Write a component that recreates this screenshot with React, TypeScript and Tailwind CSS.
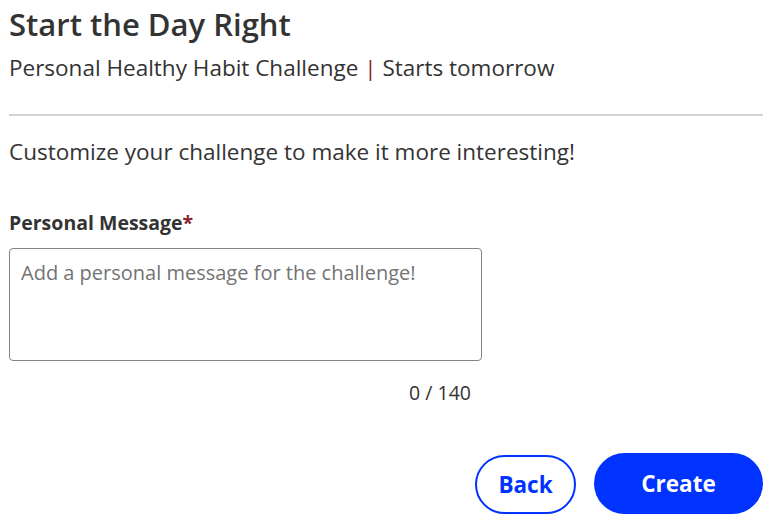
import { useState } from 'react'

const MAX_LENGTH = 140

export default function App() {
  const [message, setMessage] = useState('')

  return (
    <div className="bg-white min-h-[527px] w-[770px] pl-[9px] pr-[7px] pt-[4px] font-['Open_Sans',sans-serif] text-[#333333]">
      <h1 className="text-[31px] leading-[40px] font-semibold">
        Start the Day Right
      </h1>
      <p className="mt-[9px] text-[22.5px] leading-[30px]">
        Personal Healthy Habit Challenge{' '}
        <span className="text-[#8b1f2f]">|</span> Starts tomorrow
      </p>

      <hr className="mt-[31px] border-0 h-[2px] bg-[#d4d4d4]" />

      <p className="mt-[21px] text-[22.5px] leading-[30px]">
        Customize your challenge to make it more interesting!
      </p>

      <label
        htmlFor="personal-message"
        className="block mt-[42px] text-[19.5px] leading-[28px] font-bold"
      >
        Personal Message<span className="text-[#8b1f2f]">*</span>
      </label>

      <div className="w-[473px] mt-[11px]">
        <textarea
          id="personal-message"
          value={message}
          maxLength={MAX_LENGTH}
          onChange={(e) => setMessage(e.target.value)}
          placeholder="Add a personal message for the challenge!"
          className="block w-full h-[113px] resize-none rounded-[4px] border border-[#80858b] px-[11px] pt-[10px] pb-[8px] text-[20px] leading-[28px] text-[#333333] placeholder:text-[#737373] outline-none"
        />
        <div className="mt-[18px] pr-[11px] text-right text-[19.5px] leading-[28px]">
          {message.length} / {MAX_LENGTH}
        </div>
      </div>

      <div className="mt-[46px] flex items-end justify-end gap-[18px]">
        <button className="h-[59px] w-[101px] rounded-full border-2 border-[#0033ff] text-[22.5px] font-bold text-[#0033ff]">
          Back
        </button>
        <button className="h-[61px] w-[169px] rounded-full bg-[#0033ff] text-[22.5px] font-bold text-white">
          Create
        </button>
      </div>
    </div>
  )
}
